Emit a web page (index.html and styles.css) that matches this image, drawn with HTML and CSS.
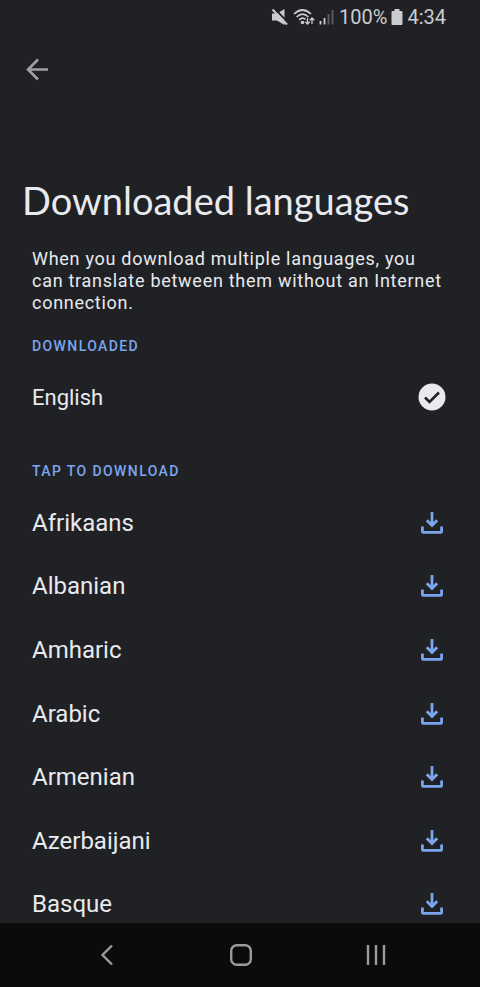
FILE: index.html
```html
<!DOCTYPE html>
<html lang="en">
<head>
<meta charset="utf-8">
<meta name="viewport" content="width=device-width, initial-scale=1">
<title>Downloaded languages</title>
<link rel="stylesheet" href="styles.css">
</head>
<body>
<svg class="sprite">
  <symbol id="download" viewBox="0 0 24 24">
    <path d="M12 1V14M6.800 9.200L12 14.400L17.200 9.200" fill="none" stroke="currentColor" stroke-width="2.800"/>
    <path d="M2.400 15.500V20.400Q2.400 21.400 3.400 21.400H20.600Q21.600 21.400 21.600 20.400V15.500" fill="none" stroke="currentColor" stroke-width="2.800"/>
  </symbol>
</svg>
<div class="screen">
  <div class="status">
    <svg width="18" height="18" viewBox="0 0 18 18" aria-label="Muted">
      <path d="M1 5.500H6L13.500 1V17L6 12.500H1Z" fill="currentColor"/>
      <path d="M3 0L18 15.500" stroke="#202125" stroke-width="1.800"/>
      <path d="M1.500 1.500L16 16.500" stroke="currentColor" stroke-width="2"/>
    </svg>
    <svg width="22" height="18" viewBox="0 0 22 18" aria-label="Wi-Fi">
      <g fill="none" stroke="currentColor" stroke-width="1.700">
        <path d="M1 6Q9.500 -2 18 6M3.600 9Q9.500 3.200 15.400 9M6.200 11.800Q9.500 8.600 12.400 11.400"/>
        <path d="M14.500 10V16M12.300 13.800L14.500 16L16.700 13.800M19 16V10M16.800 12.200L19 10L21.200 12.200" stroke-width="1.300"/>
      </g>
      <circle cx="9.500" cy="14.500" r="1.800" fill="currentColor"/>
    </svg>
    <svg width="16" height="18" viewBox="0 0 16 18" aria-label="Signal">
      <path d="M1.500 13V16.500M5.500 10V16.500" stroke="currentColor" stroke-width="1.800"/>
      <path d="M9.500 6V16.500M13.500 2V16.500" stroke="#606165" stroke-width="1.800"/>
    </svg>
    <span>100%</span>
    <svg width="12" height="18" viewBox="0 0 12 18" aria-label="Battery">
      <path d="M3.500 1H8.500V3H10.500Q11.500 3 11.500 4V16Q11.500 17 10.500 17H1.500Q.5 17 .5 16V4Q.5 3 1.500 3H3.500Z" fill="currentColor"/>
    </svg>
    <span>4:34</span>
  </div>
  <header class="toolbar">
    <button class="back" aria-label="Back">
      <svg width="24" height="24" viewBox="0 0 24 24" fill="none" stroke="currentColor" stroke-width="2.600">
        <path d="M23 12.500H3.500M13 2.500L3 12.500L13 22.500"/>
      </svg>
    </button>
  </header>
  <main class="content">
    <h1 class="title">Downloaded languages</h1>
    <p class="intro">When you download multiple languages, you can translate between them without an Internet connection.</p>
    <h2 class="label">Downloaded</h2>
    <div class="row installed">
      <span>English</span>
      <svg width="28" height="28" viewBox="0 0 28 28" aria-label="Downloaded">
        <circle cx="14" cy="14" r="13.500" fill="#e8eaee"/>
        <path d="M7 14.500L11.500 19L21 9.500" fill="none" stroke="#202125" stroke-width="2.600"/>
      </svg>
    </div>
    <h2 class="label">Tap to download</h2>
    <div class="list">
      <button class="row">Afrikaans<svg class="download"><use href="#download"/></svg></button>
      <button class="row">Albanian<svg class="download"><use href="#download"/></svg></button>
      <button class="row">Amharic<svg class="download"><use href="#download"/></svg></button>
      <button class="row">Arabic<svg class="download"><use href="#download"/></svg></button>
      <button class="row">Armenian<svg class="download"><use href="#download"/></svg></button>
      <button class="row">Azerbaijani<svg class="download"><use href="#download"/></svg></button>
      <button class="row">Basque<svg class="download"><use href="#download"/></svg></button>
    </div>
  </main>
  <nav class="navbar">
    <button aria-label="Back">
      <svg width="24" height="24" viewBox="0 0 24 24"><path d="M18 2.500L8.500 12L18 21.500"/></svg>
    </button>
    <button aria-label="Home">
      <svg width="24" height="24" viewBox="0 0 24 24"><rect x="2.200" y="2.200" width="19.600" height="19.600" rx="5.500"/></svg>
    </button>
    <button aria-label="Recent apps">
      <svg width="24" height="24" viewBox="0 0 24 24"><path d="M4 2V22M12 2V22M20 2V22"/></svg>
    </button>
  </nav>
</div>
</body>
</html>
```
FILE: styles.css
```css
* {
  box-sizing: border-box;
}

body {
  margin: 0;
  background: #202125;
  color: #e8eaee;
  font-family: Roboto, "Liberation Sans", sans-serif;
}

button {
  padding: 0;
  border: 0;
  background: none;
  color: inherit;
  font: inherit;
  cursor: pointer;
}

svg {
  flex: none;
}

.sprite {
  display: none;
}

.screen {
  display: flex;
  flex-direction: column;
  height: 100vh;
}

.status {
  display: flex;
  align-items: center;
  justify-content: flex-end;
  gap: 4px;
  height: 34px;
  padding-right: 34px;
  color: #cbccd0;
  font-size: 20px;
}

.toolbar {
  padding: 23px 25px 0;
}

.back {
  display: flex;
  color: #9fa0a5;
}

.content {
  display: flex;
  flex: 1;
  flex-direction: column;
  min-height: 0;
  padding: 95px 34px 0 32px;
  overflow: hidden;
}

.title {
  margin: 0 -12px 0 -10px;
  font-family: Lato, sans-serif;
  font-size: 38px;
  font-weight: 400;
  line-height: 48px;
}

.intro {
  margin: 24px 0 22px;
  font-size: 18px;
  line-height: 22px;
  letter-spacing: 0.04em;
}

.label {
  margin: 0;
  color: #7ba6ee;
  font-size: 14px;
  font-weight: 500;
  line-height: 20px;
  letter-spacing: 0.1em;
  text-transform: uppercase;
}

.row {
  display: flex;
  align-items: center;
  justify-content: space-between;
  font-size: 24px;
  text-align: left;
}

.installed {
  height: 64px;
  margin: 9px 0 32px;
  font-size: 22px;
}

.list {
  display: flex;
  flex: 1;
  flex-direction: column;
  margin: 10px 0 -13px;
}

.list .row {
  flex: 1;
}

.download {
  width: 24px;
  height: 24px;
  margin-right: 2px;
  color: #7ba6ee;
}

.navbar {
  display: grid;
  grid-template-columns: repeat(3, 1fr);
  height: 64px;
  padding: 0 37px 0 39px;
  background: #0b0b0b;
}

.navbar button {
  display: flex;
  align-items: center;
  justify-content: center;
}

.navbar svg {
  fill: none;
  stroke: #9b9b9b;
  stroke-width: 2.4px;
}
```
